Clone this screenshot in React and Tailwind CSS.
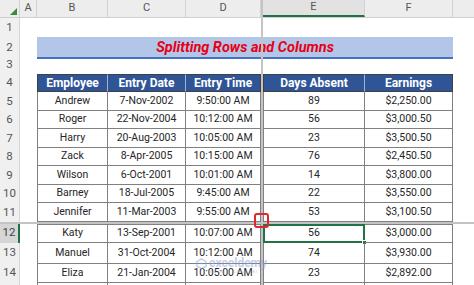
import React from 'react';

const topRows = [
  ['Andrew', '7-Nov-2002', '9:50:00 AM', '89', '$2,250.00'],
  ['Roger', '22-Nov-2004', '10:12:00 AM', '56', '$3,000.50'],
  ['Harry', '20-Aug-2003', '10:05:00 AM', '23', '$3,500.50'],
  ['Zack', '8-Apr-2005', '10:15:00 AM', '76', '$2,450.50'],
  ['Wilson', '6-Oct-2001', '10:01:00 AM', '14', '$3,800.00'],
  ['Barney', '18-Jul-2005', '9:45:00 AM', '22', '$3,550.00'],
  ['Jennifer', '11-Mar-2003', '9:55:00 AM', '53', '$3,100.50'],
];

const bottomRows = [
  { n: 12, h: 'h-[19px]', cells: ['Katy', '13-Sep-2001', '10:07:00 AM', '56', '$3,000.00'], selected: true },
  { n: 13, h: 'h-[21px]', cells: ['Manuel', '31-Oct-2004', '10:12:00 AM', '74', '$3,930.00'] },
  { n: 14, h: 'h-[19px]', cells: ['Eliza', '21-Jan-2004', '10:05:00 AM', '23', '$2,892.00'] },
  { n: '', h: 'h-[19px]', cells: ['', '', '', '', ''] },
];

const widths = ['w-[71px]', 'w-[78px]', 'w-[75px]', 'w-[102px]', 'w-[88px]'];

// one spreadsheet row: row number, column A, B-D, split bar, E-F, G
function Shell({ n, h, selected, left, right }) {
  return (
    <div className={`flex ${h}`}>
      <div
        className={`w-[20px] shrink-0 flex items-center justify-center text-[11.5px] ${
          selected
            ? 'bg-[#d6d6d6] text-[#444] border-r-2 border-[#217346]'
            : 'bg-[#f0f0f0] text-[#555] border-r border-[#d6d6d6]'
        }`}
      >
        {n}
      </div>
      <div className="w-[17px] shrink-0" />
      <div className="w-[224px] shrink-0 flex">{left}</div>
      <div className="w-[2px] shrink-0 bg-[#c4c4c4]" />
      <div className="w-[190px] shrink-0 flex">{right}</div>
      <div className="flex-1" />
    </div>
  );
}

function Cell({ w, text, first, top, selected }) {
  return (
    <div
      className={`${w} shrink-0 relative flex items-center justify-center border-r border-b border-[#808080] text-[10.5px] text-[#262626] ${
        first ? 'border-l' : ''
      } ${top ? 'border-t' : ''} ${selected ? 'outline-2 -outline-offset-2 outline-[#217346]' : ''}`}
    >
      {text}
      {selected && <div className="absolute -right-[3px] -bottom-[3px] w-[5px] h-[5px] bg-[#217346] border border-white" />}
    </div>
  );
}

function DataRow({ n, h, cells, top, selected }) {
  return (
    <Shell
      n={n}
      h={h}
      selected={selected}
      left={cells.slice(0, 3).map((t, i) => (
        <Cell key={i} w={widths[i]} text={t} first={i === 0} top={top} />
      ))}
      right={cells.slice(3).map((t, i) => (
        <Cell key={i} w={widths[i + 3]} text={t} first={i === 0} top={top} selected={selected && i === 0} />
      ))}
    />
  );
}

function HeadCell({ w, text, first, last }) {
  return (
    <div
      className={`${w} shrink-0 flex items-center justify-center bg-[#2f5597] text-white font-bold text-[12px] border-t border-b border-[#404040] border-r ${
        last ? 'border-r-[#404040]' : 'border-r-[#9fb3d9]'
      } ${first ? 'border-l border-l-[#404040]' : ''}`}
    >
      {text}
    </div>
  );
}

function ColumnHeader() {
  const letter = 'flex items-center justify-center text-[11px] text-[#555] border-r border-[#d2d2d2]';
  return (
    <div className="flex h-[18px] bg-[#ededed] border-b border-[#cfcfcf]">
      <div className="w-[20px] shrink-0 border-r border-[#d2d2d2]">
        <svg width="20" height="17" viewBox="0 0 20 17">
          <polygon points="17,8 17,15 10,15" fill="#3b8a44" />
        </svg>
      </div>
      <div className={`w-[17px] shrink-0 ${letter}`}>A</div>
      <div className={`w-[71px] shrink-0 ${letter}`}>B</div>
      <div className={`w-[78px] shrink-0 ${letter}`}>C</div>
      <div className={`w-[75px] shrink-0 ${letter}`}>D</div>
      <div className="w-[2px] shrink-0 bg-[#c4c4c4]" />
      <div className={`w-[102px] shrink-0 ${letter} bg-[#e2e2e2] border-b-2 border-b-[#217346]`}>E</div>
      <div className={`w-[88px] shrink-0 ${letter}`}>F</div>
      <div className="flex-1" />
    </div>
  );
}

function TitleRow() {
  const band = 'bg-[#b4c6e7] border-b-2 border-[#4472c4]';
  return (
    <div className="grid h-[18.5px]">
      <div className="col-start-1 row-start-1">
        <Shell
          n={2}
          h="h-full"
          left={<div className={`w-[224px] ${band}`} />}
          right={<div className={`w-[190px] ${band}`} />}
        />
      </div>
      <div className="col-start-1 row-start-1 flex">
        <div className="w-[37px] shrink-0" />
        <div className="w-[416px] shrink-0 flex items-center justify-center font-bold italic text-[14.5px] text-[#e60016] pb-[1px]">
          Splitting Rows and Columns
        </div>
      </div>
      <div className="col-start-1 row-start-1 flex">
        <div className="w-[261px] shrink-0" />
        <div className="w-[2px] shrink-0 bg-[#c4c4c4]" />
      </div>
    </div>
  );
}

export default function App() {
  return (
    <div className="relative w-[474px] h-[285px] overflow-hidden bg-white font-['Roboto',sans-serif]">
      <ColumnHeader />
      <Shell n={1} h="h-[18.5px]" />
      <TitleRow />
      <Shell n={3} h="h-[18.5px]" />
      <Shell
        n={4}
        h="h-[18.5px]"
        left={['Employee', 'Entry Date', 'Entry Time'].map((t, i) => (
          <HeadCell key={i} w={widths[i]} text={t} first={i === 0} last={i === 2} />
        ))}
        right={['Days Absent', 'Earnings'].map((t, i) => (
          <HeadCell key={i} w={widths[i + 3]} text={t} first={i === 0} last={i === 1} />
        ))}
      />
      {topRows.map((r, i) => (
        <DataRow key={i} n={5 + i} h="h-[18.5px]" cells={r} />
      ))}

      {/* horizontal split bar */}
      <div className="h-[2px] bg-[#c4c4c4]" />

      {bottomRows.map((r, i) => (
        <DataRow key={i} n={r.n} h={r.h} cells={r.cells} top={i === 0} selected={r.selected} />
      ))}

      {/* watermark */}
      <div className="absolute left-[196px] top-[257px] flex flex-col items-start opacity-50 pointer-events-none">
        <div className="flex items-center gap-[2px]">
          <svg width="11" height="11" viewBox="0 0 12 12">
            <path d="M6 1 L11 4 L11 9 L6 11.5 L1 9 L1 4 Z" fill="none" stroke="#8aa0d4" strokeWidth="1.6" />
            <path d="M4 6 L8 6" stroke="#8aa0d4" strokeWidth="1.6" />
          </svg>
          <span className="text-[12px] font-bold text-[#8aa0d4] leading-none">exceldemy</span>
        </div>
        <span className="text-[4px] text-[#8aa0d4] tracking-[1px] ml-[14px] leading-none mt-[1px]">EXCEL · DATA · BI</span>
      </div>

      {/* split handle highlight */}
      <div className="absolute left-[254px] top-[213px] w-[15px] h-[15px] border-2 border-[#e3262d] rounded-[3px]" />
    </div>
  );
}
